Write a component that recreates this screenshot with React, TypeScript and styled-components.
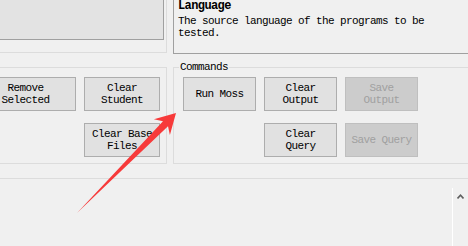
import styled, { createGlobalStyle } from "styled-components";

const GlobalStyle = createGlobalStyle`
  html, body {
    margin: 0;
    padding: 0;
    background: #f0f0f0;
  }
`;

export default function App() {
  return (
    <>
      <GlobalStyle />
      <Screen>
        <Form>
          <Row>
            <GroupBox $width={207} $height={65} $pad="0 2px 12px 0">
              <ListBox />
            </GroupBox>
            <InfoBox>
              <InfoTitle>Language</InfoTitle>
              <InfoText>The source language of the programs to be tested.</InfoText>
            </InfoBox>
          </Row>

          <Row $top={13}>
            <GroupBox $width={207} $pad="9px 6px 6px 0">
              <ButtonGrid $cols="101px 76px">
                <Button>Remove<br />Selected</Button>
                <Button>Clear<br />Student</Button>
                <Button $col={2}>Clear Base<br />Files</Button>
              </ButtonGrid>
            </GroupBox>
            <GroupBox $grow $pad="9px 0 6px 9px">
              <Legend>Commands</Legend>
              <ButtonGrid $cols="73px 73px 73px">
                <Button>Run Moss</Button>
                <Button>Clear<br />Output</Button>
                <Button disabled>Save<br />Output</Button>
                <Button $col={2}>Clear<br />Query</Button>
                <Button disabled>Save Query</Button>
              </ButtonGrid>
            </GroupBox>
          </Row>

          <OutputGroup>
            <OutputPane>
              <OutputText />
              <ScrollBar>
                <ScrollButton>
                  <svg width="7" height="5" viewBox="0 0 7 5">
                    <path d="M0.5 4.5 L3.5 1.2 L6.5 4.5" fill="none" stroke="#606060" strokeWidth="1.6" />
                  </svg>
                </ScrollButton>
              </ScrollBar>
            </OutputPane>
          </OutputGroup>
        </Form>

        {/* red annotation arrow drawn over the window */}
        <Annotation viewBox="0 0 468 246">
          <polygon
            points="77,213 163,121.2 153.9,119.3 176,113 169.9,135.1 168,126.2"
            fill="#f73a3a"
          />
        </Annotation>
      </Screen>
    </>
  );
}

const Screen = styled.div`
  position: relative;
  width: 468px;
  height: 246px;
  overflow: hidden;
  background: #f0f0f0;
  font-family: "Liberation Mono", "DejaVu Sans Mono", monospace;
  font-size: 11px;
  line-height: 12px;
  letter-spacing: -0.6px;
  color: #000;
`;

const Form = styled.div`
  display: flex;
  flex-direction: column;
  width: 509px;
  margin: -12px 0 0 -40px;
`;

const Row = styled.div<{ $top?: number }>`
  display: flex;
  align-items: flex-start;
  gap: 6px;
  margin-top: ${(p) => p.$top ?? 0}px;
`;

const GroupBox = styled.div<{ $width?: number; $height?: number; $grow?: boolean; $pad: string }>`
  position: relative;
  display: flex;
  box-sizing: border-box;
  ${(p) => (p.$width ? `width: ${p.$width}px;` : "")}
  ${(p) => (p.$height ? `height: ${p.$height}px;` : "")}
  ${(p) => (p.$grow ? "flex: 1;" : "")}
  padding: ${(p) => p.$pad};
  border: 1px solid #dcdcdc;
  justify-content: ${(p) => (p.$grow ? "flex-start" : "flex-end")};
`;

const Legend = styled.span`
  position: absolute;
  top: -7px;
  left: 5px;
  padding: 0 1px;
  background: #f0f0f0;
`;

const ListBox = styled.div`
  flex: 1;
  border: 1px solid #a0a0a0;
  background: #e3e3e3;
`;

const InfoBox = styled.div`
  flex: 1;
  box-sizing: border-box;
  height: 66px;
  padding: 11px 0 0 4px;
  border: 1px solid #a0a0a0;
`;

const InfoTitle = styled.div`
  font-size: 12px;
  font-weight: 700;
  letter-spacing: -0.6px;
`;

const InfoText = styled.div`
  margin-top: 3px;
  max-width: 252px;
`;

const ButtonGrid = styled.div<{ $cols: string }>`
  display: grid;
  grid-template-columns: ${(p) => p.$cols};
  grid-auto-rows: 34px;
  gap: 12px 8px;
`;

const Button = styled.button<{ $col?: number }>`
  grid-column: ${(p) => p.$col ?? "auto"};
  box-sizing: border-box;
  height: 34px;
  margin: 0;
  padding: 0 2px;
  border: 1px solid #adadad;
  background: #e1e1e1;
  font: inherit;
  letter-spacing: inherit;
  color: #000;
  text-align: center;

  &:disabled {
    background: #cccccc;
    border-color: #bfbfbf;
    color: #a0a0a0;
  }
`;

const OutputGroup = styled.div`
  margin-top: 14px;
  padding-top: 9px;
  border-top: 1px solid #dcdcdc;
  border-right: 1px solid #dcdcdc;
`;

const OutputPane = styled.div`
  display: flex;
  height: 70px;
`;

const OutputText = styled.div`
  flex: 1;
`;

const ScrollBar = styled.div`
  box-sizing: border-box;
  width: 16px;
  border-left: 1px solid #ffffff;
`;

const ScrollButton = styled.div`
  display: flex;
  align-items: center;
  justify-content: center;
  height: 17px;
`;

const Annotation = styled.svg`
  position: absolute;
  left: 0;
  top: 0;
  width: 468px;
  height: 246px;
  pointer-events: none;
`;
